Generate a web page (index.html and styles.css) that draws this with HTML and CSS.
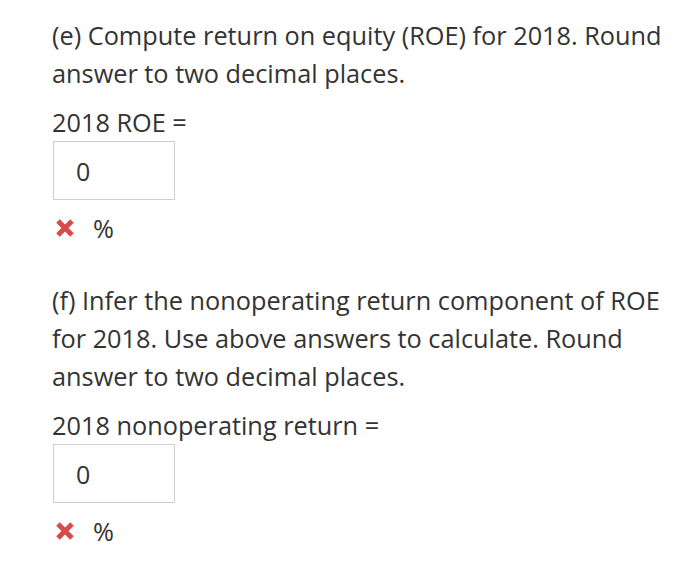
FILE: index.html
```html
<!DOCTYPE html>
<html>
<head>
<meta charset="utf-8">
<link rel="stylesheet" href="styles.css">
</head>
<body>
<div class="page">
  <section class="question">
    <p class="prompt">(e) Compute return on equity (ROE) for 2018. Round answer to two decimal places.</p>
    <div class="label">2018 ROE =</div>
    <div class="answer-box">0</div>
    <div class="feedback">
      <svg class="cross" width="20" height="18" viewBox="0 0 20 18"><path d="M3 2 L17 16 M17 2 L3 16" stroke="#d64b4b" stroke-width="5" stroke-linecap="butt"/></svg>
      <span class="unit">%</span>
    </div>
  </section>
  <section class="question second">
    <p class="prompt">(f) Infer the nonoperating return component of ROE for 2018. Use above answers to calculate. Round answer to two decimal places.</p>
    <div class="label">2018 nonoperating return =</div>
    <div class="answer-box">0</div>
    <div class="feedback">
      <svg class="cross" width="20" height="18" viewBox="0 0 20 18"><path d="M3 2 L17 16 M17 2 L3 16" stroke="#d64b4b" stroke-width="5" stroke-linecap="butt"/></svg>
      <span class="unit">%</span>
    </div>
  </section>
</div>
</body>
</html>
```
FILE: styles.css
```css
html, body {
  margin: 0;
  padding: 0;
  background: #ffffff;
}
.page {
  font-family: "Open Sans", "Noto Sans", sans-serif;
  font-size: 25.3px;
  line-height: 38px;
  color: #333333;
  padding: 16px 20px 0 52px;
}
.question {
  display: flex;
  flex-direction: column;
  align-items: flex-start;
}
.second {
  margin-top: 34px;
}
.prompt {
  margin: 0;
  width: 628px;
}
.label {
  margin-top: 11px;
}
.answer-box {
  box-sizing: border-box;
  width: 122px;
  height: 59px;
  margin-left: 1px;
  border: 1px solid #cfcfcf;
  padding-left: 22px;
  display: flex;
  align-items: center;
  font-size: 25px;
}
.feedback {
  margin-top: 9px;
  display: flex;
  align-items: center;
  height: 38px;
  padding-left: 3px;
}
.cross {
  display: block;
}
.unit {
  margin-left: 18px;
}
```
